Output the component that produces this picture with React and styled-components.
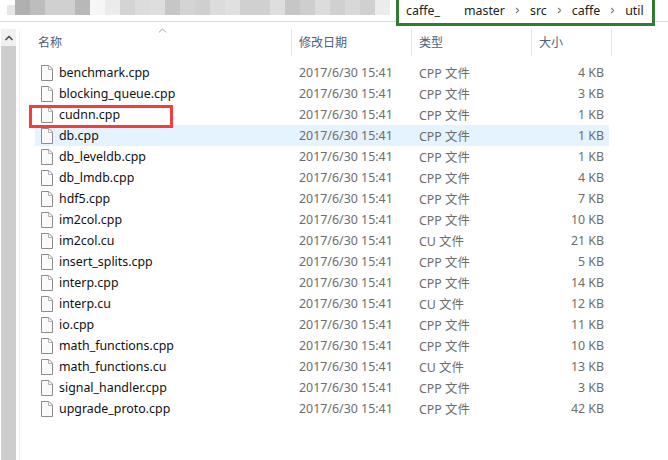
import { createGlobalStyle, styled } from "styled-components";
import { ChevronUp, ChevronRight } from "lucide-react";

const GlobalStyle = createGlobalStyle`
  html, body {
    margin: 0;
    background: #fff;
  }
  body {
    font-family: "Noto Sans", "Noto Sans CJK SC", sans-serif;
    font-size: 12.4px;
  }
`;

const files = [
  ["benchmark.cpp", "CPP", "4 KB"],
  ["blocking_queue.cpp", "CPP", "3 KB"],
  ["cudnn.cpp", "CPP", "1 KB"],
  ["db.cpp", "CPP", "1 KB"],
  ["db_leveldb.cpp", "CPP", "1 KB"],
  ["db_lmdb.cpp", "CPP", "4 KB"],
  ["hdf5.cpp", "CPP", "7 KB"],
  ["im2col.cpp", "CPP", "10 KB"],
  ["im2col.cu", "CU", "21 KB"],
  ["insert_splits.cpp", "CPP", "5 KB"],
  ["interp.cpp", "CPP", "14 KB"],
  ["interp.cu", "CU", "12 KB"],
  ["io.cpp", "CPP", "11 KB"],
  ["math_functions.cpp", "CPP", "10 KB"],
  ["math_functions.cu", "CU", "13 KB"],
  ["signal_handler.cpp", "CPP", "3 KB"],
  ["upgrade_proto.cpp", "CPP", "42 KB"],
];

// blurred-out address bar, one 15px block per entry
const mosaic = [
  "#b0b0b0", "#bdbdbd", "#d0d0d0", "#d0d0d0", "#b8b8b8", "#f6f6f6", "#ebebeb", "#d4d4d4",
  "#dcdcdc", "#dedede", "#c6c6c6", "#d4d4d4", "#cfcfcf", "#dcdcdc", "#e0e0e0", "#d0d0d0",
  "#d0d0d0", "#dedede", "#c6c6c6", "#cecece", "#dcdcdc", "#d0d0d0", "#d8d8d8", "#d0d0d0", "#ececec",
];

const crumbs = ["src", "caffe", "util"];

const FileIcon = () => (
  <svg width="12" height="16" viewBox="0 0 12 16" fill="none">
    <path d="M0.5 0.5H8L11.5 4V15.5H0.5Z" fill="#fafafa" stroke="#8c8c8c" />
    <path d="M7.5 0.5V4.5H11.5" stroke="#b4b4b4" />
  </svg>
);

export default function App() {
  return (
    <Page>
      <GlobalStyle />
      <TopBar>
        <Mosaic>
          <MosaicLead />
          {mosaic.map((shade, i) => (
            <MosaicCell key={i} $shade={shade} />
          ))}
        </Mosaic>
        <PathBox>
          <Crumb>caffe_</Crumb>
          <BlurGap />
          <Crumb>master</Crumb>
          {crumbs.map((c) => (
            <CrumbPart key={c}>
              <ChevronRight size={9} strokeWidth={3} color="#808080" />
              <Crumb>{c}</Crumb>
            </CrumbPart>
          ))}
        </PathBox>
      </TopBar>
      <Body>
        <Scrollbar>
          <ScrollButton>
            <ChevronUp size={12} strokeWidth={3.5} color="#505050" />
          </ScrollButton>
        </Scrollbar>
        <List>
          <SortArrow>
            <ChevronUp size={13} strokeWidth={1.5} color="#8a8a8a" />
          </SortArrow>
          <Header>
            <HeadCell $w={257} $first>名称</HeadCell>
            <HeadCell $w={120}>修改日期</HeadCell>
            <HeadCell $w={120}>类型</HeadCell>
            <HeadCell $w={80}>大小</HeadCell>
          </Header>
          <Rows>
            {files.map(([name, type, size]) => (
              <Row key={name} $active={name === "db.cpp"}>
                <NameCell $marked={name === "cudnn.cpp"}>
                  <FileIcon />
                  <span>{name}</span>
                </NameCell>
                <DateCell>2017/6/30 15:41</DateCell>
                <TypeCell>{type} 文件</TypeCell>
                <SizeCell>{size}</SizeCell>
              </Row>
            ))}
          </Rows>
        </List>
      </Body>
    </Page>
  );
}

const Page = styled.div`
  width: 668px;
  height: 460px;
  overflow: hidden;
  display: flex;
  flex-direction: column;
  background: #fff;
`;

const TopBar = styled.div`
  height: 21px;
  flex: none;
  display: flex;
  align-items: flex-start;
  border-bottom: 1px solid #dcdcdc;
  position: relative;
  padding-left: 7px;
`;

const Mosaic = styled.div`
  display: flex;
  height: 15px;
`;

const MosaicLead = styled.div`
  width: 8px;
  height: 10px;
  margin-top: 5px;
  background: #e6e6e6;
`;

const MosaicCell = styled.div`
  width: 15px;
  height: 15px;
  background: ${(p) => p.$shade};
`;

const PathBox = styled.div`
  position: absolute;
  left: 396px;
  top: 0;
  width: 259px;
  height: 26px;
  box-sizing: border-box;
  border: 3px solid #2e7d32;
  border-top-width: 0;
  background: #fff;
  display: flex;
  align-items: center;
  padding: 0 0 2px 7px;
`;

const Crumb = styled.span`
  font-size: 12.4px;
  color: #222;
`;

const BlurGap = styled.span`
  width: 24px;
`;

const CrumbPart = styled.span`
  display: flex;
  align-items: center;
  gap: 8px;
  margin-left: 8px;
`;

const Body = styled.div`
  flex: 1;
  display: flex;
  padding-top: 7px;
  min-height: 0;
`;

const Scrollbar = styled.div`
  width: 15px;
  margin-left: 1px;
  background: #cdcdcd;
  flex: none;
`;

const ScrollButton = styled.div`
  height: 17px;
  background: #f0f0f0;
  display: flex;
  align-items: center;
  justify-content: center;
`;

const List = styled.div`
  flex: 1;
  position: relative;
  margin-left: 3px;
  border-left: 1px solid #f2f2f2;
  padding-left: 15px;
`;

const SortArrow = styled.div`
  position: absolute;
  left: 136px;
  top: -5px;
`;

const Header = styled.div`
  display: flex;
  height: 27px;
`;

const HeadCell = styled.div`
  width: ${(p) => p.$w}px;
  box-sizing: border-box;
  padding-left: ${(p) => (p.$first ? 3 : 7)}px;
  border-right: 1px solid #e5e5e5;
  color: #4c607a;
  font-size: 12px;
  line-height: 27px;
`;

const Rows = styled.div`
  display: flex;
  flex-direction: column;
  margin-top: 6px;
`;

const Row = styled.div`
  display: flex;
  align-items: center;
  width: 574px;
  height: 21px;
  background: ${(p) => (p.$active ? "#e5f3ff" : "transparent")};
  color: #6d6d6d;
`;

const NameCell = styled.div`
  width: 257px;
  flex: none;
  box-sizing: border-box;
  padding-left: 6px;
  display: flex;
  align-items: center;
  gap: 6px;
  color: #111;
  position: relative;
  &::after {
    content: "";
    display: ${(p) => (p.$marked ? "block" : "none")};
    position: absolute;
    left: -6px;
    top: -1px;
    width: 144px;
    height: 23px;
    box-sizing: border-box;
    border: 3px solid #f73c3c;
  }
`;

const DateCell = styled.div`
  width: 120px;
  flex: none;
  padding-left: 7px;
  box-sizing: border-box;
`;

const TypeCell = styled(DateCell)``;

const SizeCell = styled.div`
  flex: 1;
  text-align: right;
  padding-right: 5px;
`;
